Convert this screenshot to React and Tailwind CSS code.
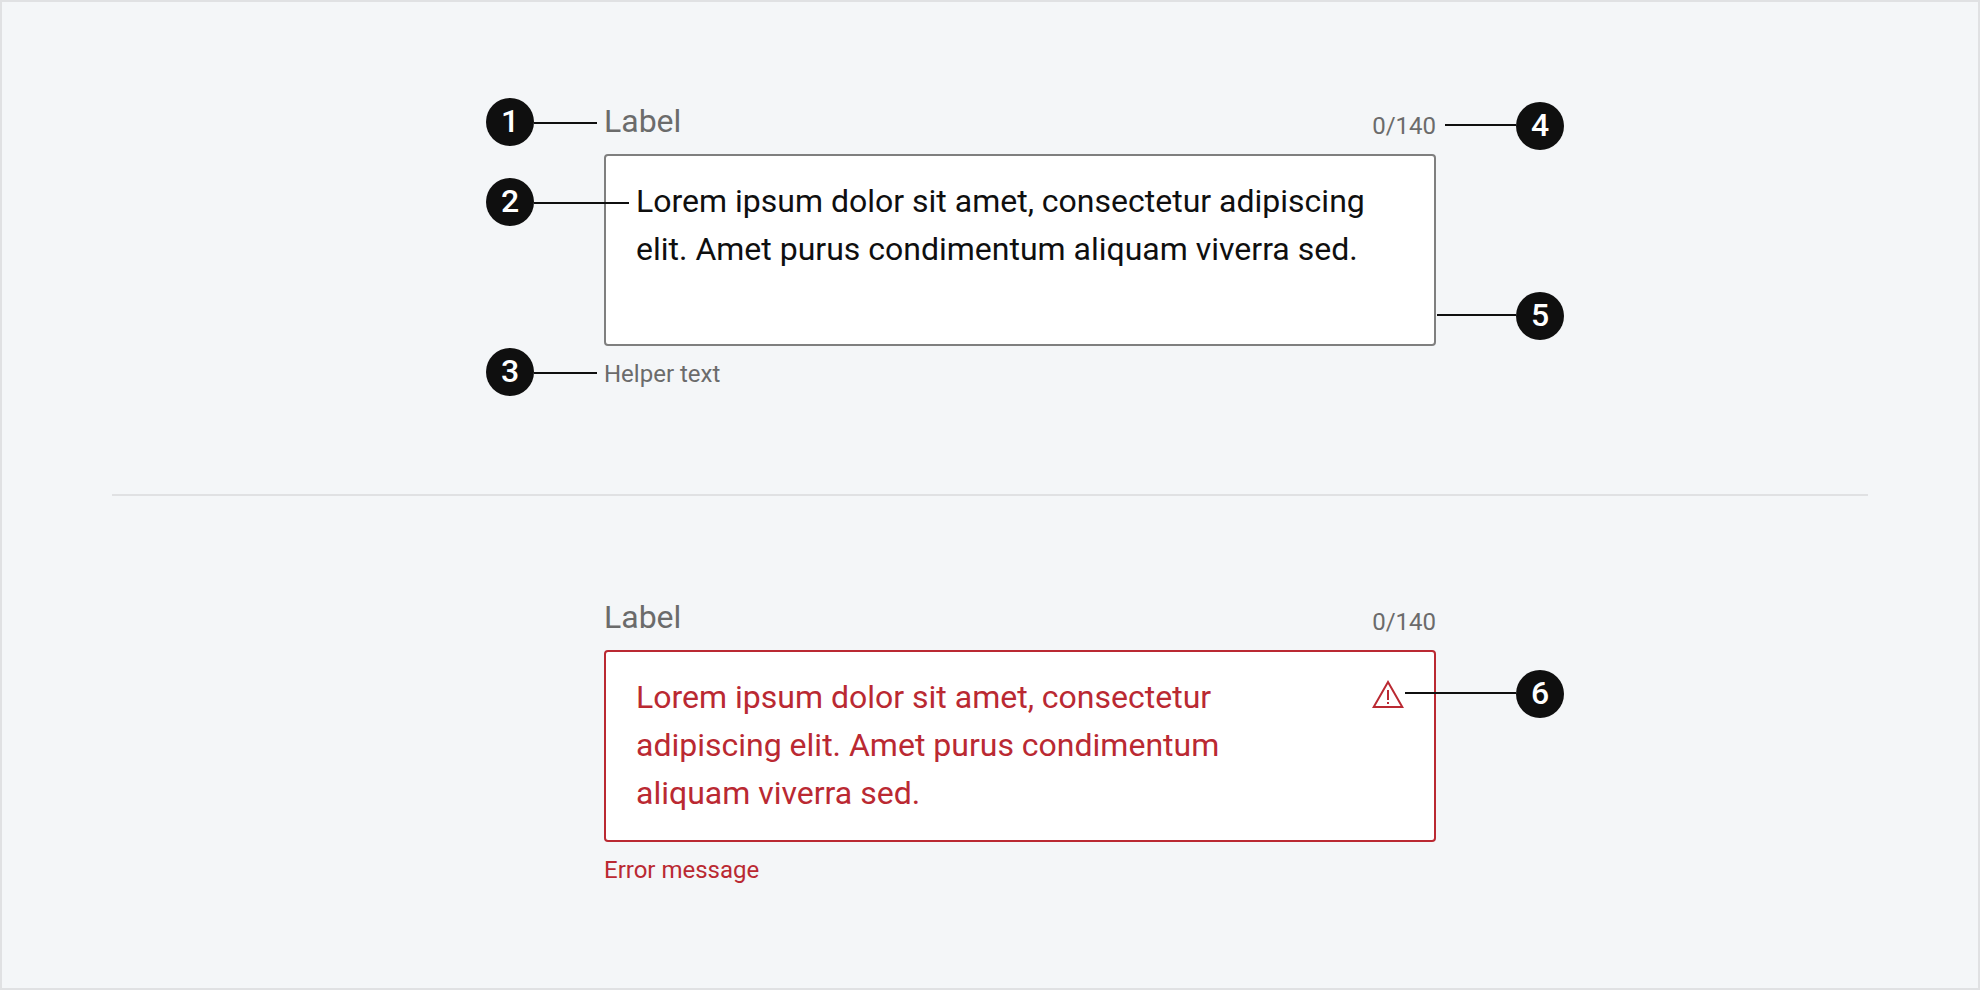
import React, { useState } from "react";
import clsx from "clsx";

// Numbered pin with its leader line, "side" is the side of the field it stands on
function Marker({ number, side, className, lineClassName }) {
    return (
        <li className={clsx("flex items-start", side === "right" && "flex-row-reverse", className)}>
            <span className="flex size-12 shrink-0 items-center justify-center rounded-full bg-[#0f0f0f] pb-[2px] text-[32px] font-medium leading-none text-white">
                {number}
            </span>
            <span
                className={clsx(
                    "h-[2px] shrink-0 bg-[#0f0f0f]",
                    side === "right" ? "mt-[22px]" : "mt-6",
                    lineClassName
                )}
            />
        </li>
    );
}

function WarningIcon() {
    return (
        <svg
            viewBox="0 0 32 32"
            className="pointer-events-none absolute right-8 top-7 size-8 text-[#ba2932]"
            fill="none"
            stroke="currentColor"
            strokeWidth="2"
            aria-hidden="true"
        >
            <path d="M16 4 30.3 29H1.7Z" />
            <path d="M16 12v10M16 24v2" />
        </svg>
    );
}

function TextAreaField({ id, label, message, text, error }) {
    const [value, setValue] = useState(text);

    return (
        <div className="pb-[6px] pt-[2px]">
            <div className="flex items-end justify-between pb-3 text-[#6b6b6b]">
                <label htmlFor={id} className="text-[32px] leading-[42px]">
                    {label}
                </label>
                <span className="text-2xl leading-8">0/140</span>
            </div>

            <div className="relative">
                <textarea
                    id={id}
                    rows={3}
                    value={value}
                    onChange={(e) => setValue(e.target.value)}
                    spellCheck={false}
                    aria-invalid={error}
                    aria-describedby={`${id}-message`}
                    className={clsx(
                        "block w-full resize-none overflow-hidden rounded-[4px] border-2 bg-white pb-[23px] pl-[30px] pt-[21px] text-[32px] leading-12 outline-none",
                        error
                            ? "border-[#ba2932] pr-[94px] text-[#ba2932]"
                            : "border-[#7f7f7f] pr-[30px] text-[#0f0f0f]"
                    )}
                />
                {error && <WarningIcon />}
            </div>

            <p
                id={`${id}-message`}
                className={clsx("pt-3 text-2xl leading-8", error ? "text-[#ba2932]" : "text-[#6b6b6b]")}
            >
                {message}
            </p>
        </div>
    );
}

// Field in the middle, a rail of markers on each side
function Example({ left, right, children }) {
    return (
        <section className="grid grid-cols-[118px_minmax(0,832px)_128px] justify-center py-[98px] pl-[182px] pr-28">
            <ul className="z-10 flex flex-col">{left}</ul>
            {children}
            <ul className="z-10 flex flex-col pt-1">{right}</ul>
        </section>
    );
}

const LOREM =
    "Lorem ipsum dolor sit amet, consectetur adipiscing elit. Amet purus condimentum aliquam viverra sed.";

function App() {
    return (
        <main className="min-h-screen bg-[#f4f6f8] font-[Roboto,sans-serif] shadow-[inset_0_0_0_2px_#e0e1e3]">
            <Example
                left={
                    <>
                        <Marker number={1} side="left" lineClassName="w-[63px]" />
                        <Marker number={2} side="left" className="mt-8" lineClassName="w-[95px]" />
                        <Marker number={3} side="left" className="mt-[122px]" lineClassName="w-[63px]" />
                    </>
                }
                right={
                    <>
                        <Marker number={4} side="right" lineClassName="w-[71px]" />
                        <Marker number={5} side="right" className="mt-[142px]" lineClassName="w-[79px]" />
                    </>
                }
            >
                <TextAreaField id="default" label="Label" message="Helper text" text={LOREM} error={false} />
            </Example>

            <hr className="mx-28 border-t-2 border-[#e0e1e3]" />

            <Example
                right={<Marker number={6} side="right" className="mt-[72px]" lineClassName="w-[111px]" />}
            >
                <TextAreaField id="invalid" label="Label" message="Error message" text={LOREM} error={true} />
            </Example>
        </main>
    );
}

export default App;
